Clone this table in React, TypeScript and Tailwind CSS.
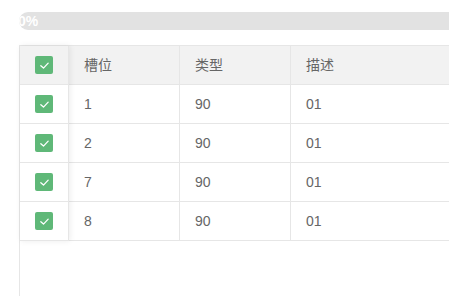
import React from 'react';

const rows = [
  { slot: '1', type: '90', desc: '01' },
  { slot: '2', type: '90', desc: '01' },
  { slot: '7', type: '90', desc: '01' },
  { slot: '8', type: '90', desc: '01' },
];

const Check = () => (
  <span className="flex h-[18px] w-[18px] items-center justify-center rounded-[2px] bg-[#5FB878]">
    <svg width="11" height="11" viewBox="0 0 12 12" fill="none">
      <path d="M2 6.2 L4.9 8.8 L10 3.4" stroke="#fff" strokeWidth="1.4" strokeLinecap="round" strokeLinejoin="round" />
    </svg>
  </span>
);

export default function App() {
  return (
    <div
      className="h-[296px] w-[449px] overflow-hidden bg-white pl-[19px] pt-[12px] text-[14px] text-[#666]"
      style={{ fontFamily: '"Liberation Sans", "Noto Sans CJK SC", sans-serif' }}
    >
      {/* progress */}
      <div className="relative h-[18px] w-[520px] overflow-hidden rounded-l-full bg-[#e2e2e2]">
        <span className="absolute left-[-1px] top-0 text-[14px] font-semibold leading-[18px] text-white">0%</span>
      </div>

      {/* table */}
      <div className="mt-[15px] flex h-[300px] w-[520px] border-l border-t border-[#e6e6e6]">
        {/* fixed checkbox column */}
        <div className="relative z-10 w-[49px] shrink-0 self-start bg-white shadow-[1px_0_6px_rgba(0,0,0,0.08)]">
          <div className="flex h-[39px] items-center justify-center border-b border-r border-[#e6e6e6] bg-[#f2f2f2]">
            <Check />
          </div>
          {rows.map((r) => (
            <div key={r.slot} className="flex h-[39px] items-center justify-center border-b border-r border-[#e6e6e6]">
              <Check />
            </div>
          ))}
        </div>

        {/* data columns */}
        <div className="flex-1">
          <div className="flex h-[39px] items-center border-b border-[#e6e6e6] bg-[#f2f2f2]">
            <div className="flex h-full w-[111px] items-center border-r border-[#e6e6e6] pl-[15px]">槽位</div>
            <div className="flex h-full w-[111px] items-center border-r border-[#e6e6e6] pl-[15px]">类型</div>
            <div className="flex h-full flex-1 items-center pl-[15px]">描述</div>
          </div>
          {rows.map((r) => (
            <div key={r.slot} className="flex h-[39px] items-center border-b border-[#e6e6e6]">
              <div className="flex h-full w-[111px] items-center border-r border-[#e6e6e6] pl-[15px]">{r.slot}</div>
              <div className="flex h-full w-[111px] items-center border-r border-[#e6e6e6] pl-[15px]">{r.type}</div>
              <div className="flex h-full flex-1 items-center pl-[15px]">{r.desc}</div>
            </div>
          ))}
        </div>
      </div>
    </div>
  );
}
